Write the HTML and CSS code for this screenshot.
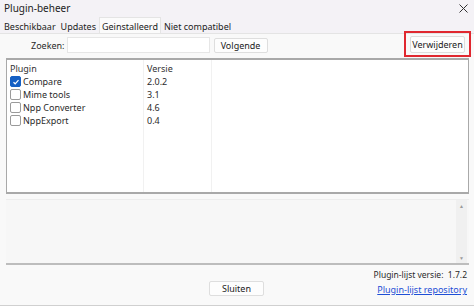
FILE: index.html
```html
<!DOCTYPE html>
<html lang="nl">
  <head>
    <meta charset="UTF-8" />
    <title>Plugin-beheer</title>
    <link rel="stylesheet" href="styles.css">
  </head>
  <body>
    <div class="window">
      <!-- Titelbalk -->
      <div class="titlebar">
        <span class="title">Plugin-beheer</span>
        <svg class="close" width="9" height="9" viewBox="0 0 9 9" fill="none" stroke="#333" stroke-width="1">
          <path d="M0.5 0.5 8.5 8.5M8.5 0.5 0.5 8.5"></path>
        </svg>
      </div>

      <!-- Tabbladen -->
      <div class="tabs">
        <span class="tab">Beschikbaar</span>
        <span class="tab">Updates</span>
        <span class="tab active">Geinstalleerd</span>
        <span class="tab">Niet compatibel</span>
      </div>

      <div class="panel">
        <div class="search-row">
          <label class="search-label">Zoeken:</label>
          <input class="search-input" type="text">
          <button class="btn btn-next">Volgende</button>
          <div class="highlight">
            <button class="btn btn-remove">Verwijderen</button>
          </div>
        </div>

        <div class="list">
          <div class="col col-name">
            <div class="cell head">Plugin</div>
            <div class="cell"><span class="check on"><svg width="8" height="8" viewBox="0 0 8 8" fill="none" stroke="#fff" stroke-width="1.2"><path d="M1.5 4.2 3.2 5.8 6.5 2.2"></path></svg></span>Compare</div>
            <div class="cell"><span class="check"></span>Mime tools</div>
            <div class="cell"><span class="check"></span>Npp Converter</div>
            <div class="cell"><span class="check"></span>NppExport</div>
          </div>
          <div class="col col-version">
            <div class="cell head">Versie</div>
            <div class="cell">2.0.2</div>
            <div class="cell">3.1</div>
            <div class="cell">4.6</div>
            <div class="cell">0.4</div>
          </div>
          <div class="col col-rest"></div>
        </div>

        <div class="desc">
          <div class="desc-text"></div>
          <div class="scrollbar">
            <span class="arrow">&#9650;</span>
            <span class="arrow">&#9660;</span>
          </div>
        </div>

        <div class="footer">
          <div class="list-version">Plugin-lijst versie:&nbsp; 1.7.2</div>
          <div class="footer-row">
            <span class="spacer"></span>
            <button class="btn btn-close">Sluiten</button>
            <a class="repo-link" href="#">Plugin-lijst repository</a>
          </div>
        </div>
      </div>
    </div>
  </body>
</html>
```

FILE: styles.css
```css
body {
  margin: 0;
  padding: 0;
  font-family: "Noto Sans", "Open Sans", sans-serif;
  font-size: 9px;
  color: #2a2a2a;
  background-color: #ffffff;
}

.window {
  width: 474px;
  height: 305px;
  display: flex;
  flex-direction: column;
  overflow: hidden;
  border-bottom: 1px solid #d0d0d0;
}

.titlebar {
  height: 16px;
  display: flex;
  align-items: center;
  justify-content: space-between;
  padding: 0 6px 0 4px;
  background-color: #f4f2f6;
}

.title {
  font-size: 10px;
  color: #222;
}

.tabs {
  height: 17px;
  display: flex;
  align-items: flex-end;
  padding-left: 2px;
  background-color: #f4f2f6;
}

.tab {
  padding: 0 2px;
  margin-right: 1px;
  line-height: 13px;
  color: #222;
}

.tab.active {
  background-color: #fbfbfb;
  padding-top: 2px;
  border: 1px solid #e4e4e4;
  border-bottom: none;
}

.panel {
  flex: 1;
  display: flex;
  flex-direction: column;
  padding: 0 5px 0 6px;
  background-color: #f9f9f9;
  border-top: 1px solid #e4e4e4;
}

.search-row {
  height: 22px;
  display: flex;
  align-items: center;
}

.search-label {
  margin-left: 25px;
  margin-right: 2px;
  white-space: nowrap;
}

.search-input {
  width: 141px;
  height: 14px;
  margin: 0 4px 0 0;
  padding: 0;
  border: 1px solid #e6e6e6;
  background-color: #fff;
}

.btn {
  font-family: inherit;
  font-size: 9px;
  color: #1a1a1a;
  background-color: #fdfdfd;
  border: 1px solid #dedede;
  border-radius: 2px;
  padding: 0;
}

.btn-next {
  width: 54px;
  height: 15px;
}

.highlight {
  margin: -3px -2px 0 auto;
  padding: 3px 4px 2px;
  border: 2px solid #e0272f;
}

.btn-remove {
  display: block;
  width: 55px;
  height: 17px;
}

.list {
  height: 132px;
  display: flex;
  background-color: #fff;
  border: 1px solid #a9a9a9;
  border-top: 2px solid #a9a9a9;
  border-bottom: 2px solid #a9a9a9;
  margin-top: 2px;
}

.col {
  border-right: 1px solid #f1f1f1;
  padding-top: 2px;
}

.col-name {
  width: 136px;
}

.col-version {
  width: 67px;
}

.col-rest {
  flex: 1;
  border-right: none;
}

.cell {
  height: 13px;
  line-height: 13px;
  display: flex;
  align-items: center;
  padding-left: 3px;
  white-space: nowrap;
}

.cell.head {
  color: #333;
}

.check {
  width: 9px;
  height: 9px;
  margin-right: 2px;
  border: 1px solid #9a9a9a;
  border-radius: 2px;
  display: inline-flex;
  align-items: center;
  justify-content: center;
  background-color: #fff;
}

.check.on {
  background-color: #1560c4;
  border-color: #1560c4;
}

.desc {
  height: 63px;
  display: flex;
  margin-top: 5px;
  background-color: #f7f7f7;
  border-top: 1px solid #ededed;
  border-bottom: 2px solid #bdbdbd;
}

.desc-text {
  flex: 1;
}

.scrollbar {
  width: 11px;
  margin-right: 2px;
  display: flex;
  flex-direction: column;
  justify-content: space-between;
  align-items: center;
  padding: 3px 0 2px;
  background-color: #f0f0f0;
  color: #9a9a9a;
  font-size: 5px;
}

.footer {
  flex: 1;
  display: flex;
  flex-direction: column;
}

.list-version {
  text-align: right;
  padding: 4px 2px 0 0;
  line-height: 11px;
  font-size: 8.5px;
}

.footer-row {
  display: flex;
  align-items: center;
  margin-top: 1px;
}

.spacer {
  width: 203px;
}

.btn-close {
  width: 55px;
  height: 15px;
}

.repo-link {
  margin-left: auto;
  margin-right: 2px;
  margin-top: 2px;
  color: #1f4fd6;
  text-decoration: underline;
  font-size: 9px;
}
```
